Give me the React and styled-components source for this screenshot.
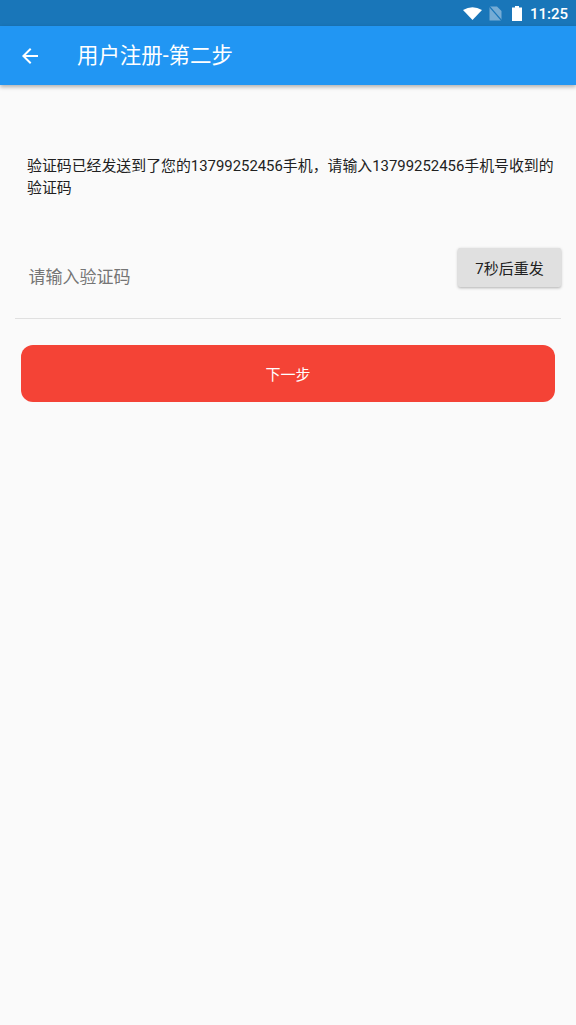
import styled, { createGlobalStyle } from 'styled-components';

const GlobalStyle = createGlobalStyle`
  html, body {
    margin: 0;
    padding: 0;
    background: #fafafa;
    font-family: Roboto, "Noto Sans CJK SC", sans-serif;
  }
`;

const Page = styled.div`
  width: 576px;
  height: 1025px;
  overflow: hidden;
  background: #fafafa;
`;

const StatusBar = styled.div`
  height: 26px;
  background: #1976b9;
  display: flex;
  align-items: center;
  justify-content: flex-end;
  color: #fff;
`;

const StatusIcon = styled.svg`
  display: block;
  margin-right: ${(p) => p.$gap}px;
`;

const Clock = styled.span`
  font-size: 15px;
  font-weight: 500;
  margin-right: 8px;
  padding-top: 2px;
  line-height: 24px;
`;

const AppBar = styled.header`
  position: relative;
  height: 59px;
  background: #2196f3;
  display: flex;
  align-items: center;
  box-shadow: 0 2px 4px rgba(0, 0, 0, 0.3);
  color: #fff;
`;

const BackIcon = styled.svg`
  display: block;
  margin-left: 18px;
`;

const Title = styled.h1`
  margin: 0 0 0 35px;
  font-size: 21.43px;
  font-weight: 400;
  line-height: 28px;
`;

const Content = styled.main`
  padding: 70px 15px 0;
`;

const Notice = styled.p`
  margin: 0 2px 0 12px;
  font-size: 14.9px;
  line-height: 22px;
  color: #212121;
`;

const CodeRow = styled.div`
  margin-top: 49px;
  height: 70px;
  border-bottom: 1px solid #e0e0e0;
  display: flex;
  justify-content: space-between;
  align-items: flex-start;
`;

const Placeholder = styled.span`
  margin: 18px 0 0 13.5px;
  font-size: 17px;
  line-height: 22px;
  color: #757575;
`;

const ResendButton = styled.button`
  width: 103px;
  height: 39px;
  padding: 0;
  border: 0;
  border-radius: 2px;
  background: #e0e0e0;
  box-shadow: 0 1px 3px rgba(0, 0, 0, 0.3);
  font-family: inherit;
  font-size: 15px;
  font-weight: 400;
  color: #212121;
`;

const NextButton = styled.button`
  display: block;
  width: 534px;
  height: 57px;
  margin: 26px 0 0 6px;
  padding: 0;
  border: 0;
  border-radius: 12px;
  background: #f44336;
  font-family: inherit;
  font-size: 15px;
  color: #fff;
`;

function App() {
  return (
    <Page>
      <GlobalStyle />
      <StatusBar>
        <StatusIcon $gap={7} width="19" height="13" viewBox="0 0 19 13">
          <path d="M0 3 Q9.5 -2.5 19 3 L9.5 13Z" fill="#fff" />
        </StatusIcon>
        <StatusIcon $gap={10} width="13" height="15" viewBox="0 0 13 15">
          <path d="M0.5 0.5H8L12.5 5V14.5H0.5Z" fill="#fff" fillOpacity="0.4" />
          <path d="M0 0L13 15" stroke="#1976b9" strokeWidth="1.2" />
        </StatusIcon>
        <StatusIcon $gap={8} width="10" height="15" viewBox="0 0 10 15">
          <path d="M3 0H7V1.5H10V15H0V1.5H3Z" fill="#fff" />
        </StatusIcon>
        <Clock>11:25</Clock>
      </StatusBar>
      <AppBar>
        <BackIcon width="24" height="24" viewBox="0 0 24 24">
          <path d="M20 11H7.83l5.59-5.59L12 4l-8 8 8 8 1.41-1.41L7.83 13H20z" fill="#fff" />
        </BackIcon>
        <Title>用户注册-第二步</Title>
      </AppBar>
      <Content>
        <Notice>
          验证码已经发送到了您的13799252456手机，请输入13799252456手机号收到的验证码
        </Notice>
        <CodeRow>
          <Placeholder>请输入验证码</Placeholder>
          <ResendButton>7秒后重发</ResendButton>
        </CodeRow>
        <NextButton>下一步</NextButton>
      </Content>
    </Page>
  );
}

export default App;
